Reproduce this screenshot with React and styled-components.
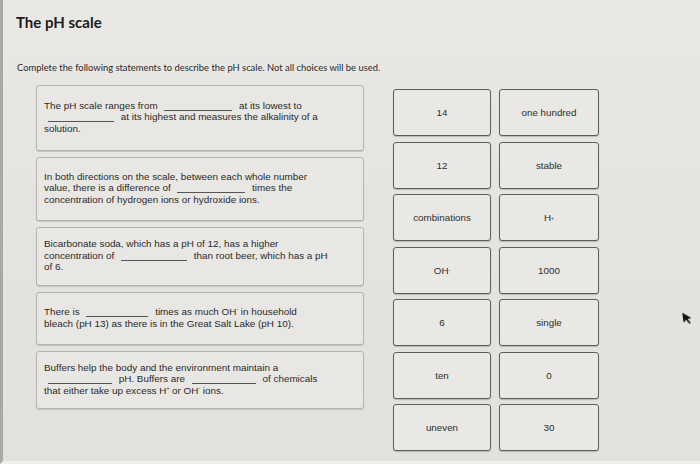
import React from "react";
import styled, { createGlobalStyle } from "styled-components";

const GlobalStyle = createGlobalStyle`
  html, body {
    margin: 0;
    padding: 0;
    background: #e5e4e0;
  }
  * {
    box-sizing: border-box;
  }
`;

const choices = [
  "14",
  "one hundred",
  "12",
  "stable",
  "combinations",
  <>
    H<sup>+</sup>
  </>,
  <>
    OH<sup>-</sup>
  </>,
  "1000",
  "6",
  "single",
  "ten",
  "0",
  "uneven",
  "30",
];

function Blank({ w }) {
  return <Gap $w={w} />;
}

function App() {
  return (
    <Page>
      <GlobalStyle />
      <Title>The pH scale</Title>
      <Intro>
        Complete the following statements to describe the pH scale. Not all
        choices will be used.
      </Intro>
      <Body>
        <Statements>
          <Statement $h={66}>
            <p>
              The pH scale ranges from <Blank w={68} /> at its lowest to
              <br />
              <Blank w={66} /> at its highest and measures the alkalinity of a
              <br />
              solution.
            </p>
          </Statement>
          <Statement $h={64}>
            <p>
              In both directions on the scale, between each whole number
              <br />
              value, there is a difference of <Blank w={68} /> times the
              <br />
              concentration of hydrogen ions or hydroxide ions.
            </p>
          </Statement>
          <Statement $h={59}>
            <p>
              Bicarbonate soda, which has a pH of 12, has a higher
              <br />
              concentration of <Blank w={66} /> than root beer, which has a pH
              <br />
              of 6.
            </p>
          </Statement>
          <Statement $h={53}>
            <p>
              There is <Blank w={62} /> times as much OH<sup>-</sup> in
              household
              <br />
              bleach (pH 13) as there is in the Great Salt Lake (pH 10).
            </p>
          </Statement>
          <Statement $h={58}>
            <p>
              Buffers help the body and the environment maintain a
              <br />
              <Blank w={64} /> pH. Buffers are <Blank w={64} /> of chemicals
              <br />
              that either take up excess H<sup>+</sup> or OH<sup>-</sup> ions.
            </p>
          </Statement>
        </Statements>
        <Choices>
          {choices.map((c, i) => (
            <Tile key={i}>{c}</Tile>
          ))}
        </Choices>
      </Body>
      <Cursor viewBox="0 0 12 14" width="12" height="14">
        <path d="M1 1 L1 11 L4 8.5 L6.5 13 L8 12.3 L5.6 7.8 L9.5 7.6 Z" fill="#111" />
      </Cursor>
    </Page>
  );
}

const Page = styled.div`
  position: relative;
  width: 700px;
  height: 464px;
  overflow: hidden;
  border-left: 3px solid #a9a8a5;
  border-bottom: 3px solid #f1f0ee;
  background: linear-gradient(180deg, #e9e8e4 0%, #e4e3df 60%, #e2e1dd 100%);
  padding: 13px 0 0 13px;
  font-family: "Liberation Sans", Arial, sans-serif;
  color: #262626;
`;

const Title = styled.h1`
  margin: 0;
  font-family: Lato, "Open Sans", sans-serif;
  font-weight: 700;
  font-size: 15px;
  line-height: 18px;
  color: #1c1c1c;
`;

const Intro = styled.div`
  margin: 31px 0 0 1px;
  font-family: Lato, "Open Sans", sans-serif;
  font-size: 9.4px;
  line-height: 11px;
  color: #2a2a2a;
`;

const Body = styled.div`
  display: flex;
  align-items: flex-start;
  gap: 29px;
  margin: 12px 0 0 20px;
`;

const Statements = styled.div`
  display: flex;
  flex-direction: column;
  gap: 6px;
  width: 328px;
`;

const Statement = styled.div`
  display: flex;
  align-items: center;
  height: ${({ $h }) => $h}px;
  padding: 0 8px 2px 7px;
  background: #e8e7e3;
  border: 1px solid #b4b3af;
  border-radius: 3px;
  box-shadow: 0 1px 1px rgba(0, 0, 0, 0.14);

  p {
    margin: 0;
    font-size: 9.9px;
    line-height: 11.5px;
    color: #2a2a2a;
  }

  sup {
    font-size: 5px;
    vertical-align: 4px;
    line-height: 0;
  }
`;

const Gap = styled.span`
  display: inline-block;
  width: ${({ $w }) => $w}px;
  margin: 0 4px;
  border-bottom: 1px solid #555;
  vertical-align: -2px;
`;

const Choices = styled.div`
  display: grid;
  grid-template-columns: 98px 100px;
  grid-auto-rows: 47px;
  column-gap: 8px;
  row-gap: 5.5px;
  margin-top: 4px;
`;

const Tile = styled.div`
  display: flex;
  align-items: center;
  justify-content: center;
  background: #e9e8e4;
  border: 1.5px solid #5e5e5c;
  border-radius: 3px;
  box-shadow: 0 1px 1px rgba(0, 0, 0, 0.2);
  font-size: 9.8px;
  color: #2e2e2e;

  sup {
    font-size: 5px;
    vertical-align: 4px;
    line-height: 0;
  }
`;

const Cursor = styled.svg`
  position: absolute;
  left: 679px;
  top: 311px;
  transform: rotate(-8deg);
  filter: blur(0.4px);
`;

export default App;
